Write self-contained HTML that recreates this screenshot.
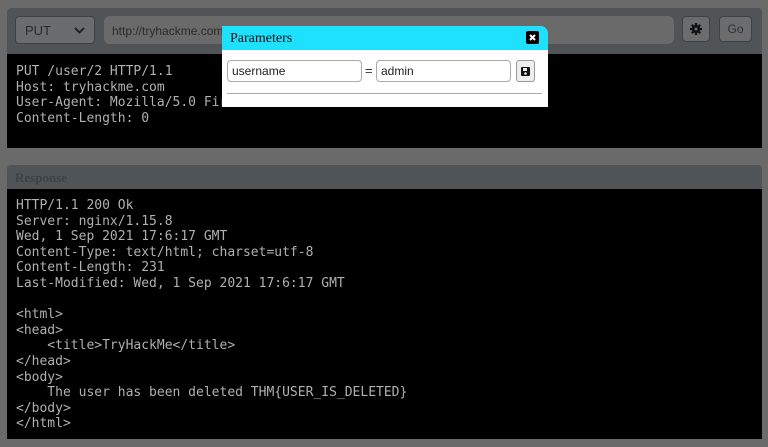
<!DOCTYPE html>
<html><head><style>
body{margin:0;width:768px;height:447px;background:#6a6a6a;position:relative;overflow:hidden;font-family:"Liberation Sans",sans-serif}
.panel{position:absolute;left:7px;width:755px;background:#505457;border-radius:4px 4px 0 0}
.term{position:absolute;left:0;right:0;background:#000;color:#b0b0b0;font:13px/15.6px "DejaVu Sans Mono",monospace;white-space:pre;padding:0 9px;box-sizing:border-box}
.sel{position:absolute;left:8px;top:8px;width:80px;height:28px;border:1px solid #3e4144;border-radius:4px;background:#6a6c6e;color:#2a2a2a;font-size:13px;box-sizing:border-box;padding:6px 0 0 9px}
.url{position:absolute;left:97px;top:8px;width:570px;height:28px;border-radius:6px;background:#6a6a6a;color:#2a2a2a;font-size:12px;box-sizing:border-box;padding:8px 8px}
.btn{position:absolute;top:8px;height:26px;border:1px solid #3e4144;border-radius:4px;background:#6a6c6e;box-sizing:border-box;color:#333;font-size:12px;text-align:center;line-height:24px}
.modal{position:absolute;left:222px;top:26px;width:326px;height:81px;background:#fff;border-radius:0 8px 0 0}
.mh{height:24px;background:#1ee0ff;border-radius:0 8px 0 0;font:14px "Liberation Serif",serif;color:#111;padding:5px 0 0 8px;box-sizing:border-box}
.in{position:absolute;top:34px;height:22px;border:1px solid #aaa;border-radius:4px;box-sizing:border-box;font-size:12px;padding:3px 4px;color:#222}
</style></head><body>
<div class="panel" style="top:8px;height:140px">
 <div class="sel">PUT<svg style="position:absolute;right:9px;top:10px" width="11" height="7"><path d="M1 1l4.5 4.5L10 1" stroke="#222" stroke-width="2" fill="none"/></svg></div>
 <div class="url">http://tryhackme.com/</div>
 <div class="btn" style="left:675px;width:28px"><svg width="12" height="12" style="margin-top:6px" viewBox="0 0 12 12"><circle cx="6" cy="6" r="4" fill="#111"/><path d="M6 0v12M0 6h12M1.8 1.8l8.4 8.4M10.2 1.8l-8.4 8.4" stroke="#111" stroke-width="2.2"/><circle cx="6" cy="6" r="1.5" fill="#6a6c6e"/></svg></div>
 <div class="btn" style="left:712px;width:33px">Go</div>
 <div class="term" style="top:46px;height:94px;padding-top:10px">PUT /user/2 HTTP/1.1
Host: tryhackme.com
User-Agent: Mozilla/5.0 Firefox
Content-Length: 0</div>
</div>
<div class="panel" style="top:165px;height:274px">
 <div style="position:absolute;left:8px;top:5px;font:bold 13px 'Liberation Serif',serif;color:#3e4245">Response</div>
 <div class="term" style="top:24px;height:250px;padding-top:9px">HTTP/1.1 200 Ok
Server: nginx/1.15.8
Wed, 1 Sep 2021 17:6:17 GMT
Content-Type: text/html; charset=utf-8
Content-Length: 231
Last-Modified: Wed, 1 Sep 2021 17:6:17 GMT

&lt;html&gt;
&lt;head&gt;
    &lt;title&gt;TryHackMe&lt;/title&gt;
&lt;/head&gt;
&lt;body&gt;
    The user has been deleted THM{USER_IS_DELETED}
&lt;/body&gt;
&lt;/html&gt;</div>
</div>
<div class="modal">
 <div class="mh">Parameters</div>
 <div style="position:absolute;right:9px;top:5px;width:13px;height:13px;background:#000;border-radius:2px"><svg width="13" height="13"><path d="M4 4l5 5M9 4l-5 5" stroke="#fff" stroke-width="2"/></svg></div>
 <div class="in" style="left:5px;width:135px">username</div>
 <div style="position:absolute;left:143px;top:37px;font-size:13px;color:#333">=</div>
 <div class="in" style="left:154px;width:135px">admin</div>
 <div style="position:absolute;left:294px;top:34px;width:19px;height:22px;border:1px solid #999;border-radius:3px;background:#eee;box-sizing:border-box"><svg width="17" height="20" viewBox="0 0 17 20"><rect x="4" y="6" width="9" height="9" rx="1" fill="#111"/><rect x="6" y="7" width="4" height="3" fill="#eee"/><circle cx="8.5" cy="12.5" r="1.3" fill="#eee"/></svg></div>
 <div style="position:absolute;left:5px;right:6px;top:67px;border-top:1px solid #aaa"></div>
</div>
</body></html>
